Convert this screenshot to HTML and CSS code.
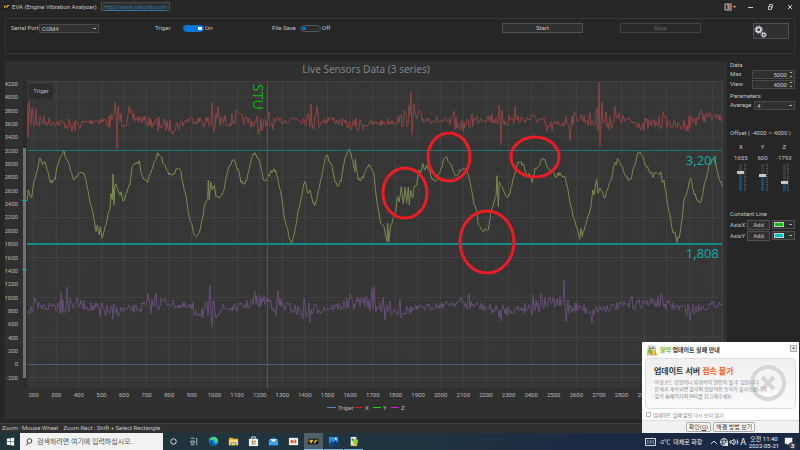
FILE: index.html
```html
<!DOCTYPE html>
<html lang="ko">
<head>
    <meta charset="UTF-8">
    <meta name="viewport" content="width=device-width, initial-scale=1.0">
    <title>EVA (Engine Vibration Analyzer)</title>
    <link rel="stylesheet" href="styles.css">
</head>
<body>
    <header class="titlebar">
        <svg class="app-icon" viewBox="0 0 14 10"><path d="M1 1h12l-2 8H0z" fill="#111"/><path d="M2 3h4L4 8H2l1-3H1zM8 2h5l-1 2h-2L8 8H6z" fill="#e8c010"/></svg>
        <h1>EVA (Engine Vibration Analyzer)</h1>
        <a class="site-link" href="http://www.swcnib.com">http://www.swcnib.com</a>
        <div class="window-buttons">
            <button type="button" aria-label="Theme"><svg viewBox="0 0 12 8"><path d="M1 1h3v6H1zM5 0v8M8 1H6M8 7H6" fill="none" stroke="#bbb"/><path d="M6 2h2v4H6z" fill="#e65a28"/><path d="M9 3h3l-1.500 2z" fill="#bbb"/></svg></button>
            <button type="button" aria-label="Minimize"><svg viewBox="0 0 12 8"><path d="M4 4.500h5" stroke="#ccc"/></svg></button>
            <button type="button" aria-label="Restore"><svg viewBox="0 0 12 8"><path d="M4.500 3.500h3v3h-3zM5.500 3V1.500h3v3H8" fill="none" stroke="#bbb"/></svg></button>
            <button type="button" aria-label="Close"><svg viewBox="0 0 12 8"><path d="M4 2l4 4M8 2l-4 4" stroke="#ccc"/></svg></button>
        </div>
    </header>

    <section class="toolbar">
        <div class="field">
            <label for="port">Serial Port</label>
            <select id="port"><option>COM4</option></select>
        </div>
        <div class="field">
            <label for="trigger">Triger</label>
            <input type="checkbox" class="toggle" id="trigger" checked>
            <span>On</span>
        </div>
        <div class="field">
            <label for="save">File Save</label>
            <input type="checkbox" class="toggle" id="save">
            <span>Off</span>
        </div>
        <button type="button" class="btn wide">Start</button>
        <button type="button" class="btn wide" disabled>Stop</button>
        <button type="button" class="btn gear" aria-label="Settings">
            <svg viewBox="0 0 14 14"><g fill="none" stroke="#ccd3e2"><circle cx="5" cy="5" r="2.500" stroke-width="2"/><circle cx="5" cy="5" r="4" stroke-dasharray="1.500 1.600"/><circle cx="10.500" cy="10.500" r="1.700" stroke-width="1.500"/><circle cx="10.500" cy="10.500" r="2.800" stroke-dasharray="1 1.200"/></g></svg>
        </button>
    </section>

    <main>
        <svg id="chart" viewBox="5 61 722 358" role="img" aria-label="Live Sensors Data">
            <rect x="5" y="61" width="722" height="358" fill="#303030"/>
            <text class="chart-title" x="366" y="73">Live Sensors Data (3 series)</text>
            <rect x="23" y="81" width="700" height="307" fill="#333"/>
            <g id="grid"></g>
            <g id="series"></g>
            <path class="limit-top" d="M27 150.500h695"/>
            <path class="limit-bottom" d="M27 244h695"/>
            <path class="stu-line" d="M267.500 82v306"/>
            <text class="stu" transform="translate(253 84) rotate(90)">STU</text>
            <text class="limit-value" x="719" y="165">3,201</text>
            <text class="limit-value" x="719" y="258">1,808</text>
            <rect x="23" y="81" width="4" height="307" fill="#2b2b2b"/>
            <rect x="23" y="148" width="3" height="230" fill="#737373"/>
            <path d="M22 200.500h5M22 269.500h5" stroke="#12a5a5"/>
            <rect x="29" y="84" width="24" height="15" fill="#2d2d2d"/>
            <text class="axis" x="41" y="93">Triger</text>
            <g id="labels"></g>
            <g class="marks">
                <ellipse cx="405" cy="193" rx="22" ry="25"/>
                <ellipse cx="449" cy="157" rx="21" ry="24"/>
                <ellipse cx="487" cy="242" rx="27" ry="31"/>
                <ellipse cx="535" cy="157" rx="24" ry="20"/>
            </g>
            <g class="legend">
                <path d="M327 407.500h9" stroke="#5f86c8"/><text x="338" y="410">Triger</text>
                <path d="M355 407.500h8" stroke="#d81818"/><text x="365" y="410">X</text>
                <path d="M373 407.500h8" stroke="#18d818"/><text x="383" y="410">Y</text>
                <path d="M391 407.500h8" stroke="#d818d8"/><text x="401" y="410">Z</text>
            </g>
        </svg>

        <aside>
            <h2>Data</h2>
            <div class="row"><label for="max">Max</label><span class="spin"><input type="number" id="max" value="5000"></span></div>
            <div class="row"><label for="view">View</label><span class="spin"><input type="number" id="view" value="4000"></span></div>
            <h2 class="params">Parameters</h2>
            <div class="row average"><label for="average">Average</label><select id="average"><option>4</option></select></div>
            <h2 class="offset">Offset ( -4000 ~ 4000 )</h2>
            <div class="sliders">
                <div><label for="ox">X</label><output>1655</output><input type="range" id="ox" min="-4000" max="4000" value="1655"></div>
                <div><label for="oy">Y</label><output>600</output><input type="range" id="oy" min="-4000" max="4000" value="600"></div>
                <div><label for="oz">Z</label><output>-1793</output><input type="range" id="oz" min="-4000" max="4000" value="-1793"></div>
            </div>
            <h2 class="constant">Constant Line</h2>
            <div class="row"><span>AxisX</span><button type="button" class="btn add">Add</button><button type="button" class="btn color" aria-label="AxisX color"><i class="green"></i></button></div>
            <div class="row"><span>AxisY</span><button type="button" class="btn add">Add</button><button type="button" class="btn color" aria-label="AxisY color"><i class="cyan"></i></button></div>
        </aside>
    </main>

    <div class="statusbar"><span>Zoom : Mouse Wheel</span><span>Zoom Rect : Shift + Select Rectangle</span></div>

    <footer class="taskbar">
        <button type="button" class="task start" aria-label="Start menu"><svg viewBox="0 0 12 12"><path d="M2 3l4-.6V6H2zM6.500 2.300L10 2v4H6.500zM2 6.500h4V10l-4-.5zM6.500 6.500H10V10.500l-3.500-.4z" fill="#fff"/></svg></button>
        <label class="search">
            <svg viewBox="0 0 8 8"><circle cx="4.500" cy="3" r="2.300" fill="none" stroke="#444"/><path d="M3 5L1 7.500" stroke="#444"/></svg>
            <input type="text" placeholder="검색하려면 여기에 입력하십시오.">
        </label>
        <button type="button" class="task" aria-label="Cortana"><svg viewBox="0 0 12 12"><circle cx="6" cy="6" r="3" fill="none" stroke="#e4e4e4"/></svg></button>
        <button type="button" class="task" aria-label="Task view"><svg viewBox="0 0 12 12"><path d="M3 2.500h4M3 5.500h4v2H3zM3 9.500h4M9.500 2v8" fill="none" stroke="#b8c0c4"/></svg></button>
        <button type="button" class="task" aria-label="Edge"><svg viewBox="0 0 12 12"><circle cx="6" cy="6" r="5.200" fill="#1479cf"/><path d="M1 5C2 0 10-1 11.200 5.500 11 8 8 8 7 7.200 8 5 5 3 1 5z" fill="#47cc8a"/><path d="M5 5c-2 3 1 6 5 4.500C8 12 2 11 2 7c0-1 1-2 3-2z" fill="#0b4f9c"/></svg></button>
        <button type="button" class="task" aria-label="Explorer"><svg viewBox="0 0 12 12"><path d="M1 2h4l1 1h5v7H1z" fill="#e0a82a"/><path d="M1 4h10v6H1z" fill="#ffd76a"/><path d="M3 10V7h6v3H8V8H4v2z" fill="#2d86d8"/></svg></button>
        <button type="button" class="task" aria-label="Store"><svg viewBox="0 0 12 12"><path d="M4 3V1h4v2" fill="none" stroke="#eee"/><path d="M1 3h10v8H1z" fill="#f3f3f3"/><path d="M4 5h2v2H4z" fill="#e84b2c"/><path d="M6.500 5h2v2h-2z" fill="#7cb82f"/><path d="M4 7.500h2v2H4z" fill="#2c9fe8"/><path d="M6.500 7.500h2v2h-2z" fill="#f5b920"/></svg></button>
        <button type="button" class="task" aria-label="Mail"><svg viewBox="0 0 12 12"><path d="M1 4l5-3 5 3v6H1z" fill="#1674b8"/><path d="M2 3.500h8L6 7z" fill="#fff"/><path d="M1 4l5 4 5-4v6H1z" fill="#38a8ec"/></svg></button>
        <button type="button" class="task" aria-label="Office"><svg viewBox="0 0 12 12"><path d="M1 2h10v8H1z" fill="#f0eeea"/><circle cx="4.500" cy="6" r="2" fill="#e4683a"/><path d="M7 4h2v4H7z" fill="#e4683a"/></svg></button>
        <button type="button" class="task current" aria-label="EVA"><svg viewBox="0 0 12 12"><path d="M1 3h11l-1 6H0z" fill="#111"/><path d="M2 4h4L4 8H2l1-2H1zM8 4h4l-1 1H9.500L8 8H6z" fill="#e8c010"/></svg></button>
        <button type="button" class="task open" aria-label="Photos"><svg viewBox="0 0 12 12"><path d="M1 1h10v10H1z" fill="#2d8ae0"/><path d="M1 9l3-4 4 6H1z" fill="#134a8c"/><path d="M5 8l3-3 3 3v3H6z" fill="#0f3a72"/><circle cx="8.500" cy="3" r="1" fill="#fff"/></svg></button>
        <button type="button" class="task open" aria-label="ALYac"><svg viewBox="0 0 12 12"><path d="M3 1h6v9H3z" fill="#eee"/><path d="M4 3h2v2H4z" fill="#444"/><circle cx="8" cy="6" r="3" fill="#8bd030"/><path d="M3 9h7v2H3z" fill="#d8c060"/></svg></button>

        <div class="tray">
            <svg class="keyboard" viewBox="0 0 12 8"><path d="M.5.5h10v7H.5z" fill="none" stroke="#ddd"/><path d="M2 3h7M2 5h7" stroke="#ccc" stroke-dasharray="1 .5"/></svg>
            <span class="weather">-2℃&nbsp; 대체로 화창</span>
            <svg viewBox="0 0 10 10"><path d="M2 7l3-3 3 3" fill="none" stroke="#ddd"/></svg>
            <svg viewBox="0 0 10 10"><g fill="none" stroke="#ddd"><circle cx="5" cy="5" r="3.500"/><path d="M1 5h8M5 1v8"/></g><path d="M6 6h3v3H6z" fill="#ddd"/></svg>
            <svg viewBox="0 0 10 10"><path d="M1 4h2l2-2v6L3 6H1zM6.500 3.500q1 1.500 0 3M8 2.500q2 2.500 0 5" fill="none" stroke="#ddd"/></svg>
            <span class="ime">A</span>
            <div class="clock"><div>오전 11:40</div><div>2022-05-21</div></div>
            <div class="notice"><svg viewBox="0 0 12 12"><path d="M1 1h9v7H6L4 10V8H1z" fill="#f2f2f2"/></svg><b>3</b></div>
        </div>
    </footer>

    <div class="popup" role="dialog" aria-label="알약 업데이트 실패 안내">
        <div class="popup-head">
            <svg viewBox="0 0 12 12"><path d="M2 1h6l2 2v8H1z" fill="#d9dfcf" stroke="#777" stroke-width=".5"/><path d="M3 3h2v1H3zM6 3h2v1H6z" fill="#333"/><circle cx="4" cy="7" r="2.500" fill="#7fba22"/><path d="M8 5l4 6H4z" fill="#f39a1c"/><path d="M8 7v2M8 9.500v1" stroke="#fff"/></svg>
            <strong><em>알약</em> 업데이트 실패 안내</strong>
            <button type="button" aria-label="닫기">×</button>
        </div>
        <div class="popup-body">
            <h3>업데이트 서버 <em>접속 불가</em></h3>
            <ul>
                <li>· 악성코드 감염이나 방화벽이 원인이 될 수 있습니다.</li>
                <li>· 문제가 계속되면 알약의 정상적인 동작이 불가능합니다.</li>
                <li>· 알약 홈페이지의 FAQ를 참고해주세요.</li>
            </ul>
            <svg viewBox="0 0 36 36"><g fill="none" stroke="#d6d6d6" stroke-width="4"><circle cx="18" cy="18" r="16"/><path d="M12 12l12 12M24 12L12 24"/></g></svg>
        </div>
        <label class="again"><input type="checkbox"> 업데이트 실패 알림 다시 보지 않기</label>
        <div class="popup-foot">
            <button type="button">확인(<u>O</u>)</button>
            <button type="button">해결 방법 보기</button>
        </div>
    </div>

    <script src="chart.js"></script>
</body>
</html>
```
FILE: styles.css
```css
* {
    box-sizing: border-box;
}
body {
    margin: 0;
    min-height: 100vh;
    display: flex;
    flex-direction: column;
    position: relative;
    background-color: #262626;
    color: #c4c4c4;
    font-family: "Liberation Sans Narrow", Roboto, "Noto Sans CJK KR", sans-serif;
    font-size: 6px;
    line-height: 8px;
}
button, input, select {
    font: inherit;
    color: inherit;
    margin: 0;
    padding: 0;
}
h1, h2, h3, ul {
    margin: 0;
    padding: 0;
    font-size: inherit;
    font-weight: normal;
}
em {
    font-style: normal;
}
svg {
    display: block;
}

/* title bar */
.titlebar {
    display: flex;
    align-items: center;
    height: 13px;
    margin-bottom: 5px;
    padding-left: 3px;
}
.app-icon {
    width: 7px;
    height: 5px;
    margin-right: 2px;
}
.titlebar h1 {
    white-space: nowrap;
}
.site-link {
    margin-left: 4px;
    min-width: 63px;
    height: 9px;
    line-height: 7px;
    padding: 0 2px;
    border: 1px solid #484848;
    background-color: #303030;
    color: #2f75a8;
    white-space: nowrap;
}
.window-buttons {
    display: flex;
    gap: 8px;
    margin-left: auto;
    padding-right: 4px;
}
.window-buttons button {
    border: 0;
    background: none;
    width: 12px;
}

/* toolbar */
.toolbar {
    display: grid;
    grid-template-columns: 144fr 117fr 230fr 118fr 133fr 36px;
    align-items: start;
    height: 36px;
    margin: 0 5px 7px;
    padding: 4px 5px;
    border: 1px solid #363636;
}
.field {
    display: flex;
    align-items: center;
    height: 10px;
}
.field label {
    width: 28px;
    white-space: nowrap;
}
select {
    appearance: none;
    height: 9px;
    padding-left: 2px;
    border: 1px solid #484848;
    border-radius: 0;
    background: linear-gradient(#aaa, #aaa) no-repeat right 2px center / 3px 1px #303030;
    line-height: 7px;
}
#port {
    width: 60px;
}
.toggle {
    appearance: none;
    width: 21px;
    height: 7px;
    margin-right: 1px;
    border: 1px solid #555;
    border-radius: 4px;
    background: radial-gradient(circle at 3px 50%, #0078d7 2px, transparent 2px) #2c2c2c;
}
.toggle:checked {
    border-color: #0078d7;
    background: radial-gradient(circle at 16px 50%, #fff 2px, transparent 2px) #0078d7;
}
.btn {
    border: 1px solid #505050;
    background-color: #303030;
    border-radius: 0;
    line-height: 8px;
}
.wide {
    width: 81px;
    height: 10px;
}
.btn:disabled {
    color: #6a6a6a;
    border-color: #404040;
    background-color: #282828;
}
.gear {
    height: 16px;
}
.gear svg {
    width: 13px;
    height: 13px;
}

/* chart and side panel */
main {
    flex: 1;
    display: flex;
    align-items: flex-start;
    gap: 3px;
    margin: 0 5px 4px;
}
#chart {
    flex: 1;
    min-width: 0;
}
#chart text {
    fill: #b8b8b8;
    font-size: 6px;
}
#chart .chart-title {
    font-family: "Noto Sans", sans-serif;
    font-size: 10px;
    fill: #828282;
    text-anchor: middle;
}
#chart .axis {
    text-anchor: middle;
}
#chart .axis-y {
    text-anchor: end;
}
#chart .stu {
    font-family: "Noto Sans", sans-serif;
    font-size: 14px;
    fill: #0dae0d;
}
#chart .limit-value {
    font-family: "Noto Sans", sans-serif;
    font-size: 13px;
    fill: #12a5a5;
    text-anchor: end;
}
.limit-top {
    stroke: #1c7a7c;
}
.limit-bottom {
    stroke: #178a8a;
    stroke-width: 2;
}
.stu-line {
    stroke: #1f7a28;
}
.grid-minor {
    stroke: #3b3b3b;
}
.grid-major {
    stroke: #444;
}
.wave {
    fill: none;
    stroke-linejoin: round;
    stroke-width: 1;
}
.wave-x {
    stroke: #8c4444;
}
.wave-y {
    stroke: #7b8c50;
}
.wave-z {
    stroke: #654e74;
}
.wave-trigger {
    stroke: #4b5f7c;
}
.marks {
    fill: none;
    stroke: #ed1c24;
    stroke-width: 3;
}
aside {
    width: 65px;
    flex: none;
}
aside h2 {
    white-space: nowrap;
}
.row {
    display: flex;
    align-items: center;
    justify-content: space-between;
    height: 10px;
}
.spin {
    position: relative;
}
.spin input {
    appearance: textfield;
    display: block;
    width: 43px;
    height: 9px;
    padding-right: 7px;
    border: 1px solid #484848;
    background-color: #303030;
    text-align: right;
}
.spin input::-webkit-inner-spin-button {
    display: none;
}
.spin::after {
    content: "";
    position: absolute;
    top: 2px;
    right: 3px;
    width: 2px;
    height: 3px;
    border: solid #aaa;
    border-width: 1px 0;
}
#average {
    width: 41px;
}
.params {
    margin-top: 3px;
}
.offset {
    margin-top: 19px;
}
.sliders {
    display: flex;
    margin-top: 6px;
}
.sliders div {
    flex: 1;
    display: flex;
    flex-direction: column;
    align-items: center;
}
.sliders output {
    margin: 3px 0 2px;
}
.sliders input {
    appearance: none;
    writing-mode: vertical-lr;
    direction: rtl;
    width: 10px;
    height: 27px;
    background: repeating-linear-gradient(#555 0 1px, transparent 1px 2px) no-repeat right / 2px 100%;
}
.sliders input::-webkit-slider-runnable-track {
    width: 3px;
    background: linear-gradient(#3a3a3a var(--fill), #124a78 var(--fill));
}
.sliders input::-webkit-slider-thumb {
    appearance: none;
    width: 7px;
    height: 3px;
    margin-left: -2px;
    background-color: #c8c8c8;
}
.constant {
    margin: 19px 0 1px;
}
.constant ~ .row {
    height: 11px;
}
.add {
    width: 23px;
    height: 10px;
    margin-left: auto;
}
.color {
    width: 23px;
    height: 9px;
    margin-left: 2px;
    background: linear-gradient(#aaa, #aaa) no-repeat right 2px center / 3px 1px #303030;
}
.color i {
    display: block;
    width: 10px;
    height: 5px;
    margin-left: 1px;
    border: 1px solid #ccc;
}
.green {
    background-color: #00c000;
}
.cyan {
    background-color: #00c0c0;
}

.statusbar {
    display: flex;
    gap: 5px;
    height: 10px;
    padding-left: 2px;
    border-top: 1px solid #3c3c3c;
    background-color: #303030;
}

/* taskbar */
.taskbar {
    display: flex;
    align-items: center;
    height: 17px;
    background: linear-gradient(90deg, #20343c, #203540 50%, #1b2943 75%, #1a2844);
}
.task {
    display: flex;
    align-items: center;
    justify-content: center;
    width: 19px;
    height: 17px;
    margin-left: 1px;
    margin-right: 1px;
    border: 0;
    background: none;
}
.task + .task {
    margin-left: 0;
}
.task svg {
    width: 11px;
    height: 11px;
}
.start {
    width: 20px;
    margin: 0;
}
.current {
    background-color: #4d5f68;
    border-bottom: 1px solid #76b9ed;
}
.open {
    border-bottom: 1px solid #76b9ed;
}
.search {
    display: flex;
    align-items: center;
    width: 143px;
    height: 17px;
    padding-left: 5px;
    background-color: #f2f2f2;
}
.search svg {
    width: 8px;
    height: 8px;
}
.search input {
    flex: 1;
    min-width: 0;
    margin-left: 4px;
    border: 0;
    background: none;
    font-size: 7px;
}
.search input::placeholder {
    color: #555;
}
.tray {
    display: flex;
    align-items: center;
    margin-left: auto;
    padding-right: 6px;
    color: #eee;
}
.tray svg {
    width: 10px;
    height: 10px;
}
.tray .keyboard {
    width: 12px;
    height: 8px;
    margin-right: 2px;
}
.weather {
    width: 50px;
    white-space: nowrap;
}
.ime {
    margin-left: 1px;
    font-family: Roboto, sans-serif;
    font-size: 9px;
}
.clock {
    width: 36px;
    text-align: center;
    font-family: Roboto, "Noto Sans CJK KR", sans-serif;
    line-height: 7px;
}
.notice {
    position: relative;
    margin-left: 2px;
}
.notice b {
    position: absolute;
    right: -2px;
    bottom: -2px;
    width: 7px;
    border-radius: 4px;
    background-color: #444;
    text-align: center;
    line-height: 7px;
}

/* update notice */
.popup {
    position: absolute;
    right: 1px;
    bottom: 17px;
    width: 157px;
    background-color: #fff;
    color: #333;
}
.popup-head {
    display: flex;
    align-items: center;
    height: 16px;
    padding: 0 2px 0 4px;
}
.popup-head svg {
    width: 12px;
    height: 11px;
    margin-right: 2px;
}
.popup-head em {
    color: #7fba22;
}
.popup-head button {
    width: 7px;
    height: 7px;
    margin: 0 0 4px auto;
    border: 1px solid #aaa;
    background-color: #eee;
    line-height: 4px;
}
.popup-body {
    position: relative;
    height: 51px;
    margin: 0 3px;
    padding: 7px 8px;
    border: 1px solid #ddd;
    border-radius: 4px;
    background: linear-gradient(#f0f0f0, #fafafa);
}
.popup-body h3 {
    font-size: 8px;
    font-weight: bold;
    line-height: 11px;
    margin-bottom: 2px;
}
.popup-body h3 em {
    color: #f2641c;
}
.popup-body ul {
    position: relative;
    z-index: 1;
    margin-left: -2px;
    list-style: none;
    color: #888;
    font-size: 5px;
    line-height: 7px;
    white-space: nowrap;
}
.popup-body svg {
    position: absolute;
    right: 9px;
    top: 6px;
    width: 36px;
    height: 36px;
}
.again {
    display: flex;
    align-items: center;
    gap: 2px;
    height: 11px;
    padding-left: 4px;
    color: #777;
    font-size: 5px;
}
.again input {
    appearance: none;
    width: 5px;
    height: 5px;
    border: 1px solid #bbb;
}
.popup-foot {
    display: flex;
    justify-content: center;
    gap: 2px;
    height: 13px;
    padding-top: 1px;
    border-top: 1px solid #ddd;
    background-color: #f1f1f1;
}
.popup-foot button {
    height: 10px;
    padding: 0 2px;
    border: 1px solid #aaa;
    border-radius: 2px;
    background-color: #fafafa;
    line-height: 8px;
}
```
FILE: chart.js
```javascript
const NS = "http://www.w3.org/2000/svg";
const grid = document.getElementById("grid");
const series = document.getElementById("series");
const labels = document.getElementById("labels");

const toX = v => 33.5 + (v - 200) * 0.2262;
const toY = v => 364.3 - v * 0.06675;

function add(parent, name, attrs, text) {
    const el = document.createElementNS(NS, name);
    for (const key in attrs) el.setAttribute(key, attrs[key]);
    if (text !== undefined) el.textContent = text;
    parent.appendChild(el);
}

// grid
let minor = "";
let major = "";
for (let v = 180; v <= 3240; v += 10) minor += `M${toX(v)} 81V388`;
for (let v = -320; v <= 4200; v += 40) minor += `M27 ${toY(v)}H722`;
for (let v = 200; v <= 3200; v += 100) major += `M${toX(v)} 81V388`;
for (let v = -200; v <= 4200; v += 600) major += `M27 ${toY(v)}H722`;
add(grid, "path", { d: minor, class: "grid-minor", "stroke-width": 0.8 });
add(grid, "path", { d: major, class: "grid-major", "stroke-width": 1 });
add(grid, "path", { d: "M23 81.500H722.500V388", class: "grid-major", fill: "none" });

for (let v = 200; v <= 2900; v += 100) {
    add(labels, "text", { x: toX(v), y: 397, class: "axis" }, v);
}
for (let v = -200; v <= 4200; v += 200) {
    add(labels, "text", { x: 18, y: toY(v) + 2, class: "axis-y" }, v);
}

let seed = 7;
function random() {
    seed = (seed * 16807) % 2147483647;
    return seed / 2147483647 - 0.5;
}

function level(points, x) {
    let i = 1;
    while (i < points.length - 1 && points[i][0] < x) i++;
    const [x0, y0] = points[i - 1];
    const [x1, y1] = points[i];
    return y0 + (y1 - y0) * (x - x0) / (x1 - x0);
}

// slow drift + noise that swells near each spike
function noisy(base, spikes, amount) {
    let d = "";
    for (let x = 27; x <= 722; x += 1) {
        let swell = 1;
        for (const [sx] of spikes) swell += 1.4 * Math.exp(-Math.abs(sx - x) / 6);
        let y = level(base, x) + random() * amount * Math.min(swell, 2.6);
        for (const [sx, sy] of spikes) if (sx === x) y = sy;
        d += (d ? "L" : "M") + x + " " + y.toFixed(1);
    }
    return d;
}

const baseX = [[27,120],[55,122],[75,126],[95,120],[110,122],[132,117],[150,122],[175,127],[190,119],[210,123],[240,119],[265,125],[295,118],[315,121],[330,119],[350,125],[380,123],[405,119],[430,119],[465,126],[480,118],[495,118],[515,120],[535,118],[550,127],[578,117],[595,122],[620,119],[645,125],[665,122],[680,127],[700,116],[722,118]];
const spikesX = [[27,104],[28,137],[29,101],[32,108],[36,109],[72,132],[115,102],[117,149],[118,106],[129,106],[158,131],[174,131],[212,102],[214,132],[218,106],[236,110],[258,134],[269,112],[311,104],[317,106],[358,131],[409,105],[411,92],[412,135],[414,104],[454,111],[472,114],[499,105],[501,145],[515,106],[547,132],[570,141],[597,108],[599,82],[600,146],[602,102],[615,106],[644,131],[663,112],[688,131],[700,112]];
const baseZ = [[27,310],[50,306],[75,303],[110,312],[140,308],[165,302],[200,311],[235,308],[265,300],[300,311],[330,308],[365,301],[400,311],[430,307],[460,302],[500,311],[525,308],[550,302],[590,310],[620,306],[655,302],[690,310],[722,303]];
const spikesZ = [[35,298],[61,291],[67,287],[69,312],[100,317],[113,319],[148,294],[156,293],[194,316],[208,316],[210,285],[212,327],[255,291],[276,316],[278,290],[304,298],[310,323],[350,294],[372,289],[374,287],[385,320],[400,299],[469,294],[501,321],[533,295],[541,293],[564,280],[566,321],[592,323],[632,296],[661,294],[690,320]];
add(series, "path", { d: noisy(baseX, spikesX, 7), class: "wave wave-x" });
add(series, "path", { d: noisy(baseZ, spikesZ, 7), class: "wave wave-z" });

// Y samples: three blocks of x,y pairs, three steps to a unit
const blocksY = [
    [0, "82,212 85,180 89,195 95,203 103,150 110,125 118,85 125,98 135,95 148,145 157,160 165,150 172,108 182,80 190,63 200,88 205,95 212,125 222,150 232,140 243,128 252,130 258,150 265,185 272,225 282,265 288,305 292,285 298,315 301,290 306,325 312,305 320,275 330,235 333,190 337,210 339,132 342,225 345,165 352,175 360,195 364,185 368,212 374,210 382,180 390,165 395,120 405,100 418,92 423,125 433,150 443,158 452,130 460,105 468,88 473,68 482,80 490,100 500,120 507,135 522,130 532,118 543,125 550,165 560,210 568,260 575,280 580,305 589,320 600,300 607,265 617,215 623,210 625,150 628,210 632,155 637,180 643,165 648,200 658,205 665,195 672,180 682,130 690,105 702,88 708,105 718,130 723,158 740,152 747,120 757,80 765,68 772,85 779,95"],
    [260, "0,100 10,150 22,148 30,130 47,120 55,155 62,185 70,240 80,290 90,330 95,340 103,310 112,260 122,210 130,165 135,155 142,185 150,180 156,205 164,228 172,200 182,150 190,110 200,75 210,95 218,120 225,155 235,170 243,155 248,120 255,85 262,68 270,62 278,90 285,125 286,88 295,150 310,145 318,118 326,103 335,118 343,140 350,210 357,250 362,280 372,290 376,310 381,335 383,280 386,335 392,285 402,260 408,240 412,200 418,215 424,170 430,222 435,172 440,218 445,172 448,225 452,180 458,205 462,175 470,165 476,120 482,130 488,100 493,118 500,105 510,125 517,150 530,150 540,125 550,90 560,80 570,100 580,125 590,138 600,120 610,115 620,118 628,150 636,185 642,225 650,240 655,285 660,290 665,300 670,305 676,295 685,300 692,250 700,225 708,200 711,137 715,230 718,155 727,170 738,198 750,192 758,150 768,120 775,95"],
    [500, "60,98 72,105 80,140 90,135 97,158 105,115 115,110 125,85 135,88 145,115 155,125 165,138 180,128 193,138 203,175 213,230 225,275 233,300 239,328 243,295 247,320 255,290 265,255 273,230 278,180 283,195 290,148 294,190 300,175 306,185 313,205 322,180 332,155 340,115 355,88 365,110 375,135 386,150 395,140 402,110 412,75 420,65 430,80 440,112 457,138 470,128 482,125 487,158 492,150 500,205 512,270 520,310 525,305 531,337 540,310 545,275 552,210 562,180 572,145 580,180 590,210 602,218 610,180 620,140 630,100 640,85 650,115 657,145 667,170"]
];
const pointsY = [];
for (const [start, text] of blocksY) {
    for (const pair of text.split(" ")) {
        const [x, y] = pair.split(",").map(Number);
        pointsY.push([start + x / 3, 130 + y / 3]);
    }
}
let waveY = "";
pointsY.forEach(([x, y], i) => {
    waveY += (i ? "L" : "M") + x.toFixed(1) + " " + y.toFixed(1);
    const next = pointsY[i + 1];
    if (next && next[0] - x > 2) {
        for (let sx = x + 1; sx < next[0] - 0.5; sx += 1) {
            const sy = y + (next[1] - y) * (sx - x) / (next[0] - x) + random() * 5;
            waveY += "L" + sx.toFixed(1) + " " + sy.toFixed(1);
        }
    }
});
add(series, "path", { d: waveY, class: "wave wave-y" });
add(series, "path", { d: "M27 364.500H722", class: "wave wave-trigger" });

document.querySelectorAll(".sliders input").forEach(input => {
    const part = (4000 - input.value) / 80;
    input.style.setProperty("--fill", part + "%");
});
```
